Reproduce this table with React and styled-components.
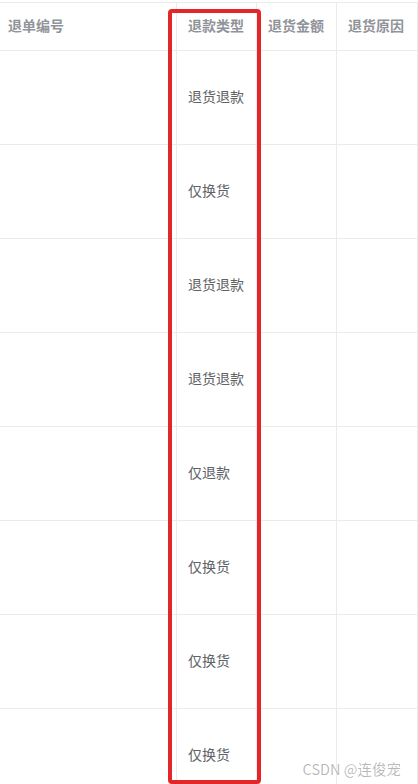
import React from 'react';
import styled, { createGlobalStyle } from 'styled-components';

const GlobalStyle = createGlobalStyle`
  html, body {
    margin: 0;
    padding: 0;
    background: #ffffff;
    overflow: hidden;
  }
  body {
    font-family: "Noto Sans CJK SC", "Noto Sans", sans-serif;
  }
`;

const rows = ['退货退款', '仅换货', '退货退款', '退货退款', '仅退款', '仅换货', '仅换货', '仅换货'];

const columns = ['退单编号', '退款类型', '退货金额', '退货原因'];

function App() {
    return (
        <>
            <GlobalStyle />
            <Page>
                <Table>
                    {columns.map((title, index) => (
                        <HeadCell key={title} first={index === 0}>{title}</HeadCell>
                    ))}
                    {rows.map((type, index) => (
                        <React.Fragment key={index}>
                            <Cell first />
                            <Cell>{type}</Cell>
                            <Cell />
                            <Cell />
                        </React.Fragment>
                    ))}
                </Table>

                {/* highlight around the refund type column */}
                <Highlight />
                <Watermark>CSDN @连俊宠</Watermark>
            </Page>
        </>
    );
}

const Page = styled.div`
    position: relative;
    width: 418px;
    height: 784px;
    overflow: hidden;
    padding-top: 2px;
    box-sizing: border-box;
`;

const Table = styled.div`
    display: grid;
    grid-template-columns: 177px 80px 80px 1fr;
    grid-template-rows: 48px;
    grid-auto-rows: 94px;
    border-top: 1px solid #ebebeb;
    font-size: 14px;
    line-height: 1;
`;

const HeadCell = styled.div`
    display: flex;
    align-items: center;
    padding: 0 ${p => (p.first ? '8px' : '11px')};
    padding-bottom: 4px;
    border-right: 1px solid #ebebeb;
    border-bottom: 1px solid #ebebeb;
    color: #909399;
    font-weight: bold;
    white-space: nowrap;
    overflow: hidden;
`;

const Cell = styled.div`
    display: flex;
    align-items: center;
    padding: 0 ${p => (p.first ? '8px' : '11px')};
    padding-bottom: 3px;
    border-right: 1px solid #ebebeb;
    border-bottom: 1px solid #ebebeb;
    color: #606266;
    white-space: nowrap;
    overflow: hidden;
`;

const Highlight = styled.div`
    position: absolute;
    left: 168px;
    top: 9px;
    width: 93px;
    height: 775px;
    box-sizing: border-box;
    border: 4px solid #e3262a;
    border-radius: 4px;
    pointer-events: none;
`;

const Watermark = styled.div`
    position: absolute;
    right: 17px;
    bottom: 8px;
    font-size: 14.5px;
    line-height: 1;
    color: rgba(0, 0, 0, 0.28);
    text-shadow: 0 0 1px rgba(255, 255, 255, 0.9);
    white-space: nowrap;
`;

export default App;
